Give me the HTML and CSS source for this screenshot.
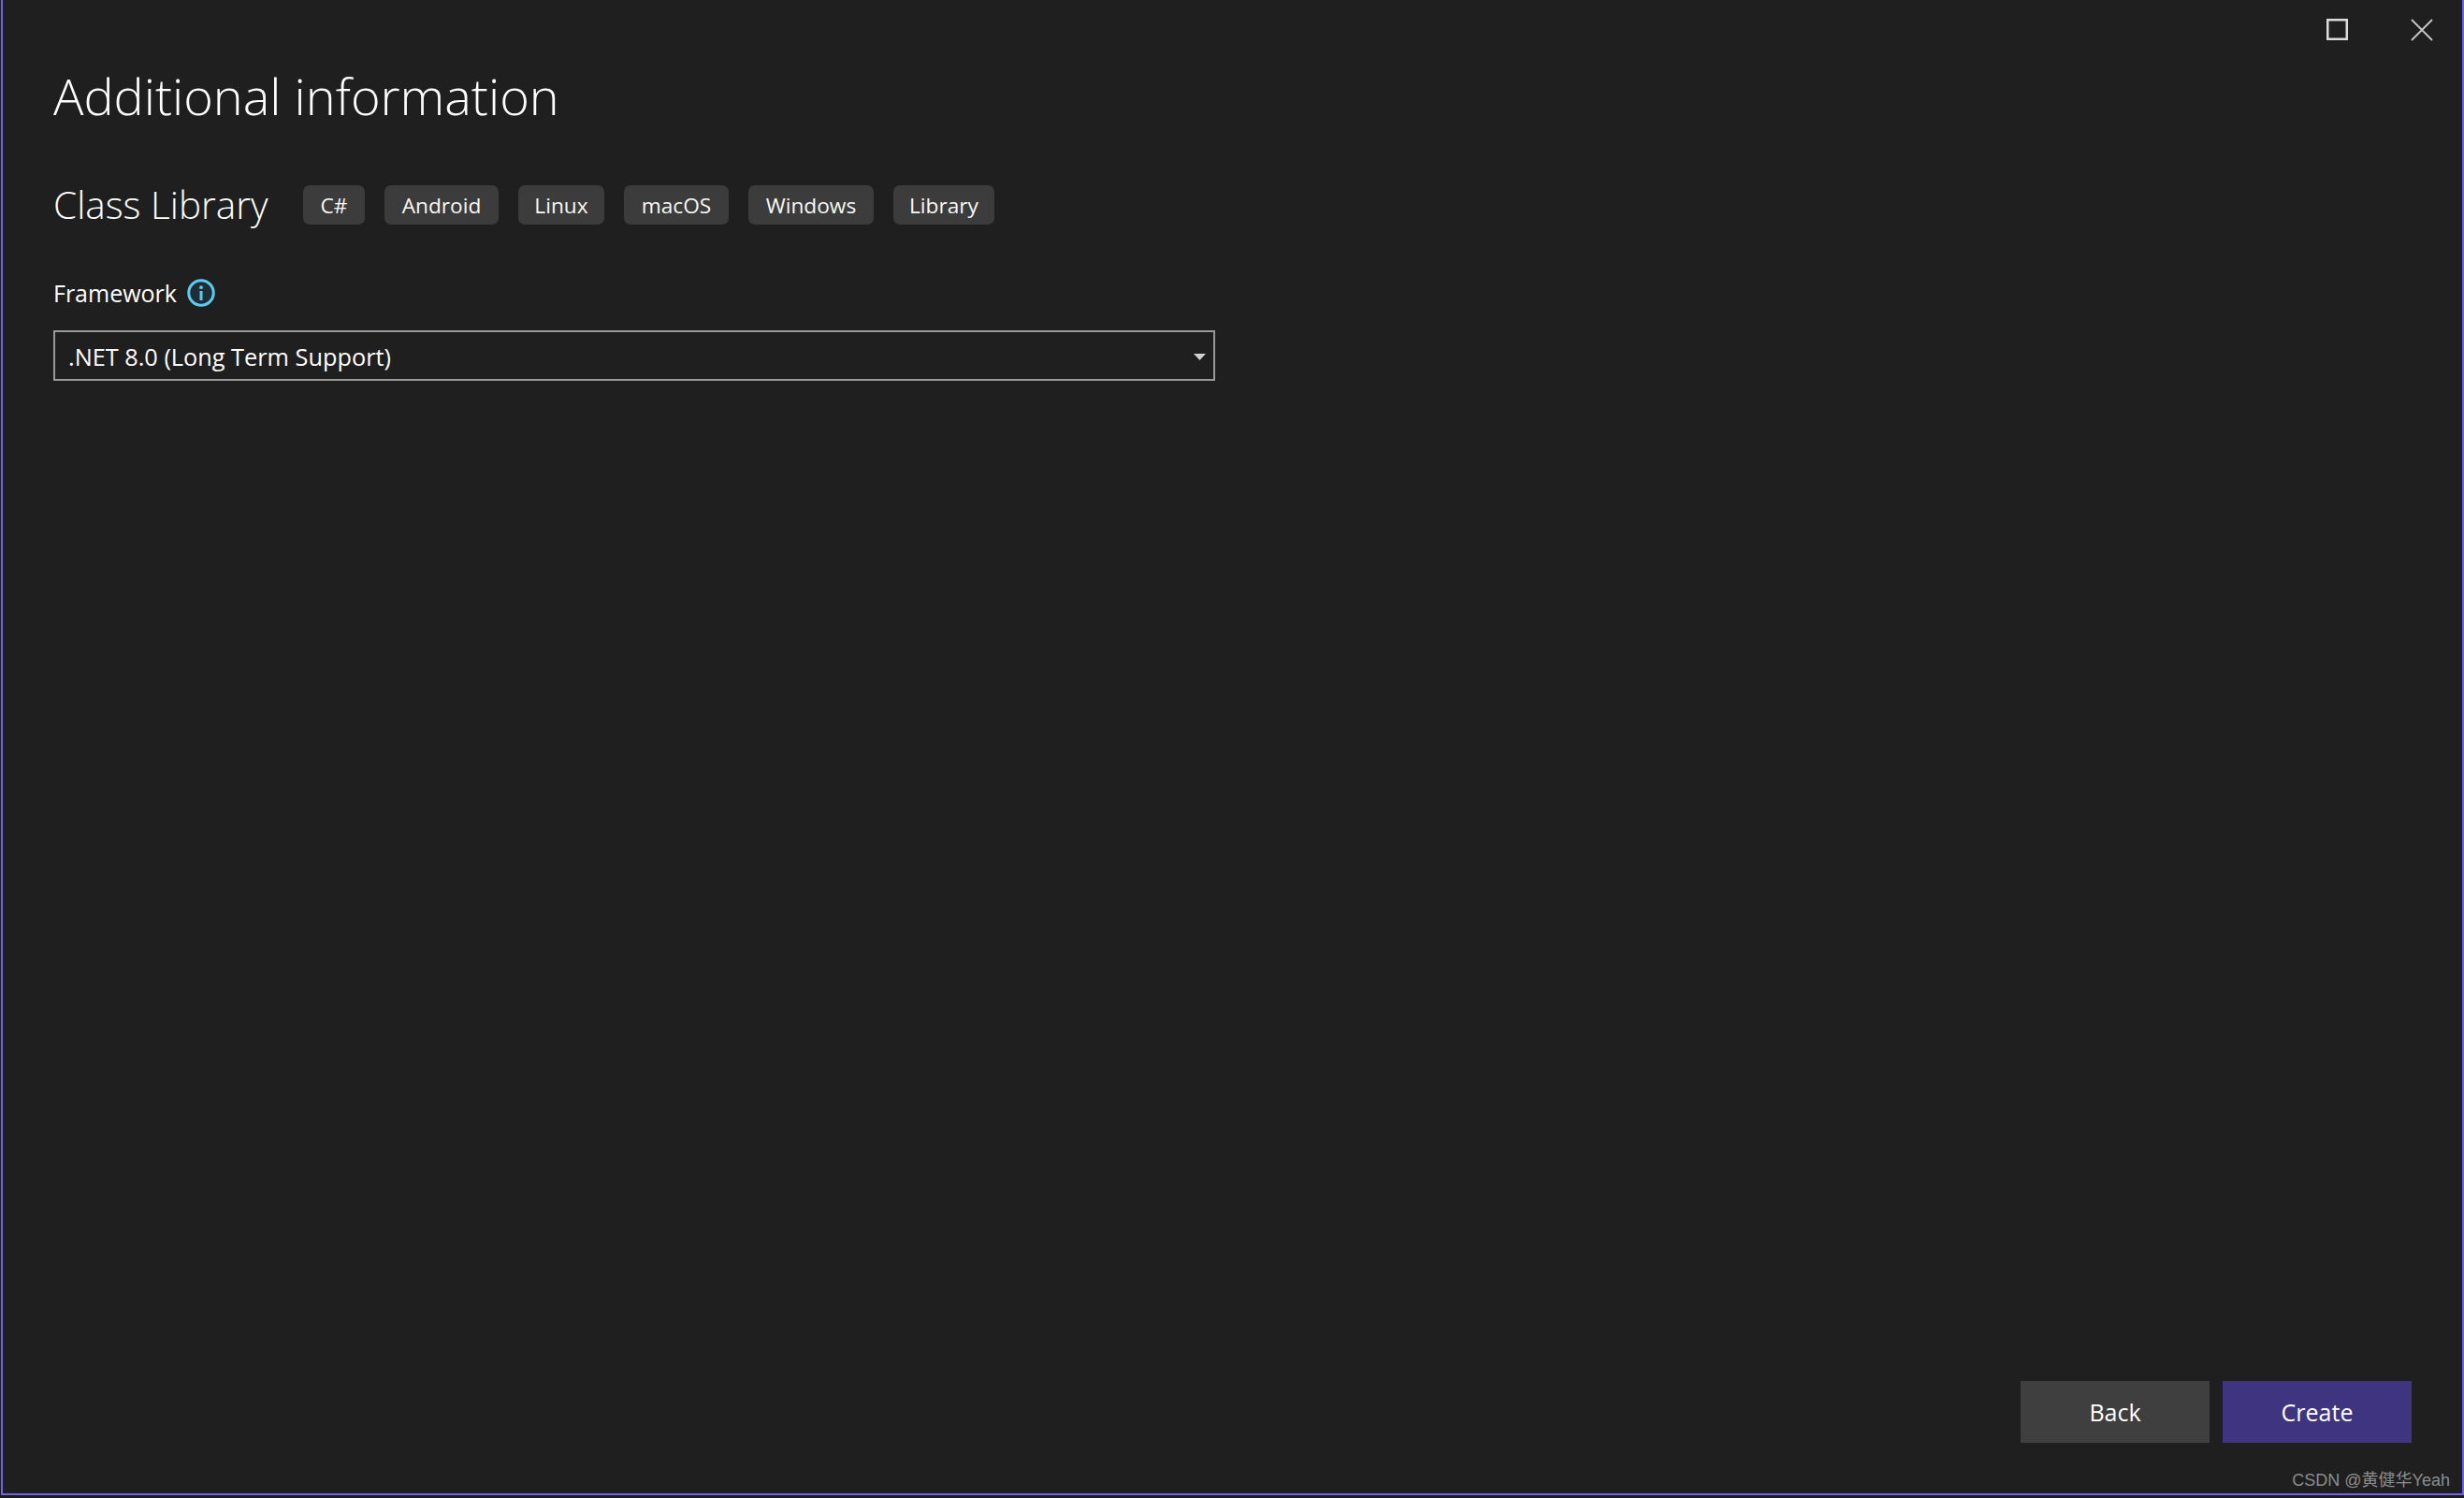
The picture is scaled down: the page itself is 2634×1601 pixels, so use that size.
FILE: index.html
```html
<!DOCTYPE html>
<html lang="en">
<head>
<meta charset="utf-8">
<title>Additional information</title>
<link rel="stylesheet" href="styles.css">
</head>
<body>
<div class="window">
  <div class="controls">
    <svg class="ctl-max" width="24" height="24" viewBox="0 0 24 24"><rect x="1.25" y="1.25" width="20.5" height="20.5" fill="none" stroke="#dcdcdc" stroke-width="2.5"/></svg>
    <svg class="ctl-close" width="24" height="24" viewBox="0 0 24 24"><path d="M1 1L23 23M23 1L1 23" fill="none" stroke="#c8c8c8" stroke-width="1.8"/></svg>
  </div>
  <main class="content">
    <h1 class="title">Additional information</h1>
    <div class="template-row">
      <h2 class="template-name">Class Library</h2>
      <ul class="tags">
        <li class="tag tag-csharp">C#</li>
        <li class="tag tag-android">Android</li>
        <li class="tag tag-linux">Linux</li>
        <li class="tag tag-macos">macOS</li>
        <li class="tag tag-windows">Windows</li>
        <li class="tag tag-library">Library</li>
      </ul>
    </div>
    <div class="field-label">
      <span>Framework</span>
      <svg class="info" width="30" height="30" viewBox="0 0 30 30"><circle cx="15" cy="15" r="13.25" fill="#1f2d35" stroke="#5ccbf0" stroke-width="3"/><circle cx="15" cy="9.2" r="1.9" fill="#5ccbf0"/><rect x="13.5" y="13" width="3" height="10" fill="#5ccbf0"/></svg>
    </div>
    <div class="select">
      <span class="select-value">.NET 8.0 (Long Term Support)</span>
      <svg class="caret" width="13" height="7" viewBox="0 0 13 7"><path d="M0 0H13L6.5 7Z" fill="#d0d0d0"/></svg>
    </div>
  </main>
  <footer class="actions">
    <div class="btn btn-back">Back</div>
    <div class="btn btn-create">Create</div>
  </footer>
</div>
<div class="watermark">CSDN @黄健华Yeah</div>
</body>
</html>
```
FILE: styles.css
```css
* { box-sizing: border-box; }
html, body { margin: 0; height: 100%; }
body {
  background: #1c1c1c;
  color: #fff;
  font-family: "Open Sans", "Noto Sans", sans-serif;
  overflow: hidden;
  position: relative;
}
.window {
  margin-left: 1px;
  height: 1598px;
  background: #1f1f1f;
  border-left: 2px solid #7160e8;
  border-right: 2px solid #7160e8;
  border-bottom: 2px solid #7160e8;
  display: flex;
  flex-direction: column;
}
.controls {
  display: flex;
  justify-content: flex-end;
  gap: 66px;
  padding: 20px 31px 0 0;
  height: 44px;
}
.content { flex: 1; padding-left: 54px; }
.title {
  margin: 21px 0 0;
  font-size: 54px;
  line-height: 74px;
  font-weight: 350;
}
.template-row {
  display: flex;
  align-items: center;
  margin-top: 59px;
  height: 42px;
}
.template-name {
  margin: 0;
  width: 267px;
  font-size: 40.5px;
  font-weight: 350;
  line-height: 44px;
}
.tags {
  list-style: none;
  display: flex;
  gap: 21px;
  margin: 0;
  padding: 0;
}
.tag {
  height: 42px;
  line-height: 44px;
  background: #3c3c3c;
  border-radius: 7px;
  font-size: 22.7px;
  text-align: center;
  color: #f8f8f8;
}
.tag-csharp { width: 66px; }
.tag-android { width: 122px; }
.tag-linux { width: 92px; }
.tag-macos { width: 112px; }
.tag-windows { width: 134px; }
.tag-library { width: 108px; }
.field-label {
  display: flex;
  align-items: center;
  gap: 11px;
  margin-top: 58px;
  height: 30px;
  font-size: 25px;
}
.select {
  margin-top: 25px;
  width: 1242px;
  height: 54px;
  border: 2px solid #999;
  display: flex;
  align-items: center;
  justify-content: space-between;
  padding: 2px 8px 0 14px;
  font-size: 25.3px;
}
.actions {
  display: flex;
  justify-content: flex-end;
  gap: 14px;
  padding: 0 54px 54px 0;
}
.btn {
  width: 202px;
  height: 66px;
  line-height: 66px;
  text-align: center;
  font-size: 25px;
}
.btn-back { background: #3f3f3f; }
.btn-create { background: #3f3480; }
.watermark {
  position: absolute;
  right: 15px;
  top: 1571px;
  font-family: "Liberation Sans", "Noto Sans CJK SC", sans-serif;
  font-size: 18px;
  line-height: 22px;
  color: #8c8c8c;
}
```
